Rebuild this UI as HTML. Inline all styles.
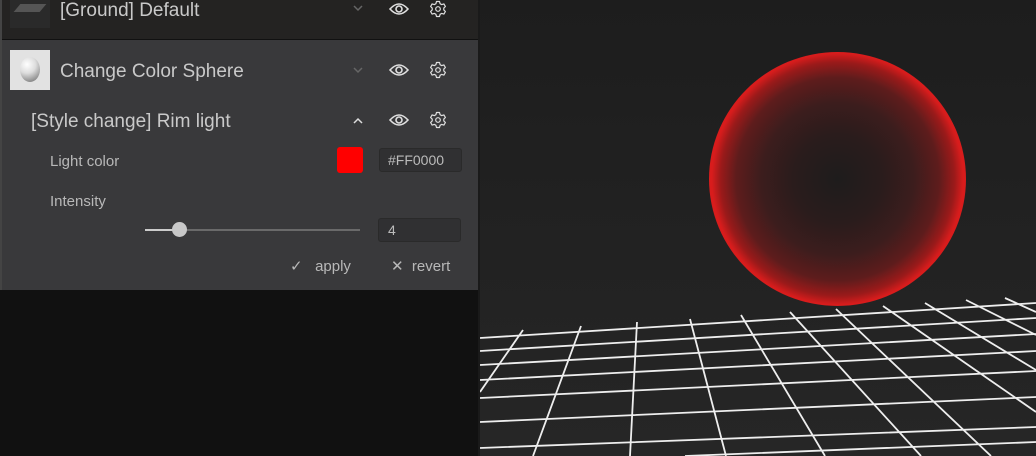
<!DOCTYPE html>
<html><head><style>
body{margin:0;width:1036px;height:456px;overflow:hidden;background:#111;font-family:"Liberation Sans",sans-serif;position:relative}
.a{position:absolute}
.t{color:#c9c9c9;font-size:19px;white-space:nowrap}
.s{color:#b8b8b8;font-size:15px;white-space:nowrap}
</style></head><body>
<div class="a" style="left:0;top:0;width:480px;height:456px;background:#111"></div>
<div class="a" style="left:2px;top:0;width:476px;height:39px;background:#242322"></div>
<div class="a" style="left:2px;top:40px;width:476px;height:250px;background:#39393b"></div>
<div class="a" style="left:0;top:0;width:2px;height:290px;background:#444"></div>
<div class="a" style="left:478px;top:0;width:2px;height:456px;background:#1a1a1a"></div>
<div class="a" style="left:10px;top:0;width:40px;height:28px;background:#2a2a2a"></div>
<div class="a" style="left:17px;top:4px;width:26px;height:8px;background:#555;transform:skewX(-40deg)"></div>
<div class="a t" style="left:60px;top:0px">[Ground] Default</div>
<div class="a" style="left:10px;top:50px;width:40px;height:40px;background:#e2e2e2"></div>
<div class="a" style="left:20px;top:57px;width:20px;height:25px;border-radius:50%;background:radial-gradient(circle at 35% 30%,#fff 0%,#ddd 40%,#777 90%)"></div>
<div class="a t" style="left:60px;top:61px">Change Color Sphere</div>
<div class="a t" style="left:31px;top:111px">[Style change] Rim light</div>
<div class="a s" style="left:50px;top:153px">Light color</div>
<div class="a s" style="left:50px;top:193px">Intensity</div>
<div class="a" style="left:337px;top:147px;width:26px;height:26px;border-radius:3px;background:#f00"></div>
<div class="a" style="left:379px;top:148px;border:1px solid #2a2a2a;border-radius:3px;background:#303032;color:#bbb;font-size:14px;line-height:22px;padding-left:8px;box-sizing:border-box;width:83px;height:24px">#FF0000</div>
<div class="a" style="left:378px;top:218px;width:83px;height:24px;border:1px solid #2a2a2a;border-radius:3px;background:#303032;color:#bbb;font-size:14px;line-height:22px;padding-left:9px;box-sizing:border-box">4</div>
<div class="a" style="left:145px;top:229px;width:215px;height:2px;background:#6a6a6a"></div>
<div class="a" style="left:145px;top:229px;width:35px;height:2px;background:#ccc"></div>
<div class="a" style="left:172px;top:222px;width:15px;height:15px;border-radius:50%;background:#c8c8c8"></div>
<div class="a s" style="left:290px;top:257px">✓&nbsp;&nbsp; apply</div>
<div class="a s" style="left:391px;top:257px">✕&nbsp;&nbsp;revert</div>
<svg class="a" style="left:0;top:0" width="480" height="140">
<g fill="none" stroke-width="1.5">
<path d="M354 6l4 4 4-4" stroke="#666"/>
<path d="M354 68l4 4 4-4" stroke="#666"/>
<path d="M354 123l4-4 4 4" stroke="#ddd"/>
</g>
<g fill="none" stroke="#e0e0e0" stroke-width="1.6">
<path d="M390 9q9-10 18 0q-9 10-18 0z"/><circle cx="399" cy="9" r="3"/>
<path d="M390 70q9-10 18 0q-9 10-18 0z"/><circle cx="399" cy="70" r="3"/>
<path d="M390 120q9-10 18 0q-9 10-18 0z"/><circle cx="399" cy="120" r="3"/>
</g>
<g fill="none" stroke="#e0e0e0" stroke-width="1.2" stroke-linejoin="round">
<g id="g"><circle cx="438" cy="9" r="2.3"/><path d="M436.5 1.5h3l.6 2.2 1.6.9 2.2-.7 1.5 2.6-1.6 1.6v1.8l1.6 1.6-1.5 2.6-2.2-.7-1.6.9-.6 2.2h-3l-.6-2.2-1.6-.9-2.2.7-1.5-2.6 1.6-1.6v-1.8l-1.6-1.6 1.5-2.6 2.2.7 1.6-.9z"/></g>
<use href="#g" y="61"/><use href="#g" y="111"/>
</g>
</svg>
<div class="a" style="left:480px;top:0;width:556px;height:456px;background:linear-gradient(#1d1d1d,#262626)"></div>
<div class="a" style="left:709px;top:52px;width:257px;height:254px;border-radius:50%;background:radial-gradient(circle closest-side at 50% 50%,#1e1c1c 0%,#2a1c1c 35%,#3c1d1d 60%,#5e1c1c 80%,#9a1a1a 92%,#d81c1c 99%)"></div>
<svg class="a" style="left:480px;top:0" width="556" height="456">
<g stroke="#eee" stroke-width="1.8" fill="none" transform="translate(-480 0)">
<path d="M480 338L1036 303M480 351L1036 318M480 365L1036 334M480 380L1036 351M480 398L1036 371M480 422L1036 397M480 448L1036 427M685 456L1036 442"/>
<path d="M523 330L480 392M581 326L533 456M637 322L630 456M690 319L726 456M741 315L825 456M790 312L921 456M836 309L991 456M883 306L1036 412M925 303L1036 370M966 300L1036 335M1005 298L1036 312"/>
</g>
</svg>
</body></html>
